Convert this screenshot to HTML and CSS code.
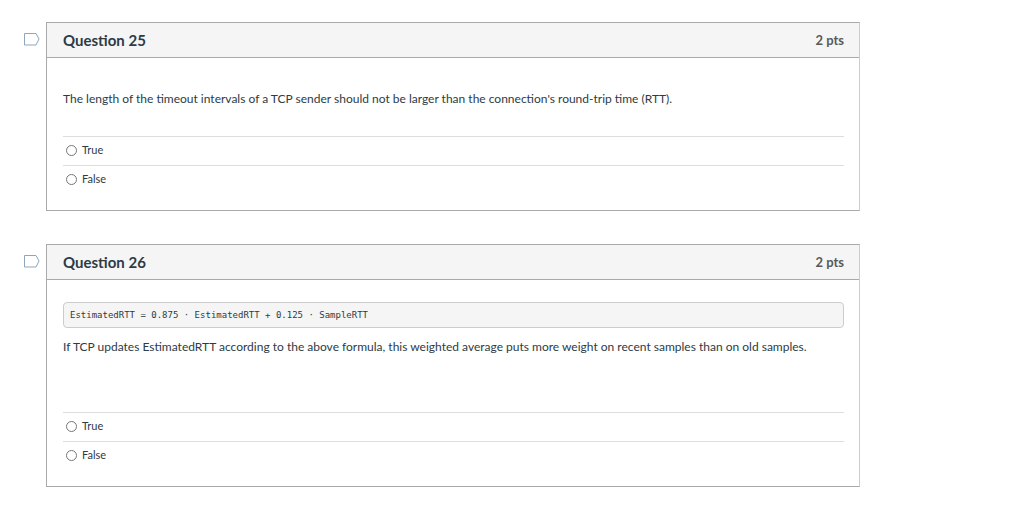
FILE: index.html
```
<!DOCTYPE html>
<html lang="en">
<head>
    <meta charset="UTF-8">
    <meta name="viewport" content="width=device-width, initial-scale=1.0">
    <title>Quiz</title>
    <link rel="stylesheet" href="styles.css">
</head>
<body>
    <form class="quiz">
        <section class="row">
            <button type="button" class="flag" aria-label="Flag question 25">
                <svg width="16" height="14" viewBox="0 0 16 14"><path d="M.5 1.5h11.5l3 5.5-3 6H.5z"/></svg>
            </button>
            <div class="question">
                <header class="header">
                    <h2>Question 25</h2>
                    <span class="points">2 pts</span>
                </header>
                <div class="body">
                    <p class="text">The length of the timeout intervals of a TCP sender should not be larger than the connection's round-trip time (RTT).</p>
                    <div class="answers">
                        <label class="answer"><input type="radio" name="q25" value="true"> True</label>
                        <label class="answer"><input type="radio" name="q25" value="false"> False</label>
                    </div>
                </div>
            </div>
        </section>

        <section class="row">
            <button type="button" class="flag" aria-label="Flag question 26">
                <svg width="16" height="14" viewBox="0 0 16 14"><path d="M.5 1.5h11.5l3 5.5-3 6H.5z"/></svg>
            </button>
            <div class="question">
                <header class="header">
                    <h2>Question 26</h2>
                    <span class="points">2 pts</span>
                </header>
                <div class="body with-formula">
                    <pre class="formula">EstimatedRTT = 0.875 · EstimatedRTT + 0.125 · SampleRTT</pre>
                    <p class="text">If TCP updates EstimatedRTT according to the above formula, this weighted average puts more weight on recent samples than on old samples.</p>
                    <div class="answers">
                        <label class="answer"><input type="radio" name="q26" value="true"> True</label>
                        <label class="answer"><input type="radio" name="q26" value="false"> False</label>
                    </div>
                </div>
            </div>
        </section>
    </form>
</body>
</html>
```
FILE: styles.css
```
* {
    box-sizing: border-box;
}
body {
    font-family: Lato, "Liberation Sans", sans-serif;
    font-size: 12px;
    color: #2d3b45;
    background: white;
    margin: 0;
}
.quiz {
    max-width: 860px;
    padding: 22px 0 0 24px;
}
.row {
    display: flex;
    align-items: flex-start;
    gap: 6px;
    margin-bottom: 33px;
}
.flag {
    width: 16px;
    margin-top: 10px;
    padding: 0;
    border: 0;
    background: none;
    cursor: pointer;
}
.flag svg {
    display: block;
    fill: none;
    stroke: #8ea6bc;
}
.question {
    flex: 1;
    border: 1px solid #aaa;
    border-right-color: #ccc;
}
.header {
    display: flex;
    justify-content: space-between;
    align-items: center;
    height: 35px;
    padding: 0 15px 0 16px;
    background: #f5f5f5;
    border-bottom: 1px solid #aaa;
}
.header h2 {
    margin: 0;
    font-size: 15px;
}
.points {
    font-size: 13px;
    font-weight: bold;
    color: #595959;
}
.body {
    padding: 32px 15px 16px 16px;
}
.text {
    margin: 0;
    line-height: 18px;
}
.answers {
    margin-top: 28px;
}
.answer {
    display: flex;
    align-items: flex-start;
    gap: 5px;
    padding: 5px 0 7px;
    border-top: 1px solid #ddd;
    font-size: 11px;
    line-height: 16px;
}
.answer input {
    appearance: none;
    width: 11px;
    height: 11px;
    margin: 3px 0 0 3px;
    border: 1px solid #767676;
    border-radius: 50%;
    background: white;
}
.answer input:checked {
    background: #2d3b45;
}
.with-formula {
    padding-top: 22px;
}
.formula {
    margin: 0 0 10px;
    padding: 4px 6px;
    border: 1px solid #ccc;
    border-radius: 4px;
    background: #f5f5f5;
    font-family: "DejaVu Sans Mono", monospace;
    font-size: 9px;
    line-height: 16px;
}
.with-formula .answers {
    margin-top: 56px;
}
```
